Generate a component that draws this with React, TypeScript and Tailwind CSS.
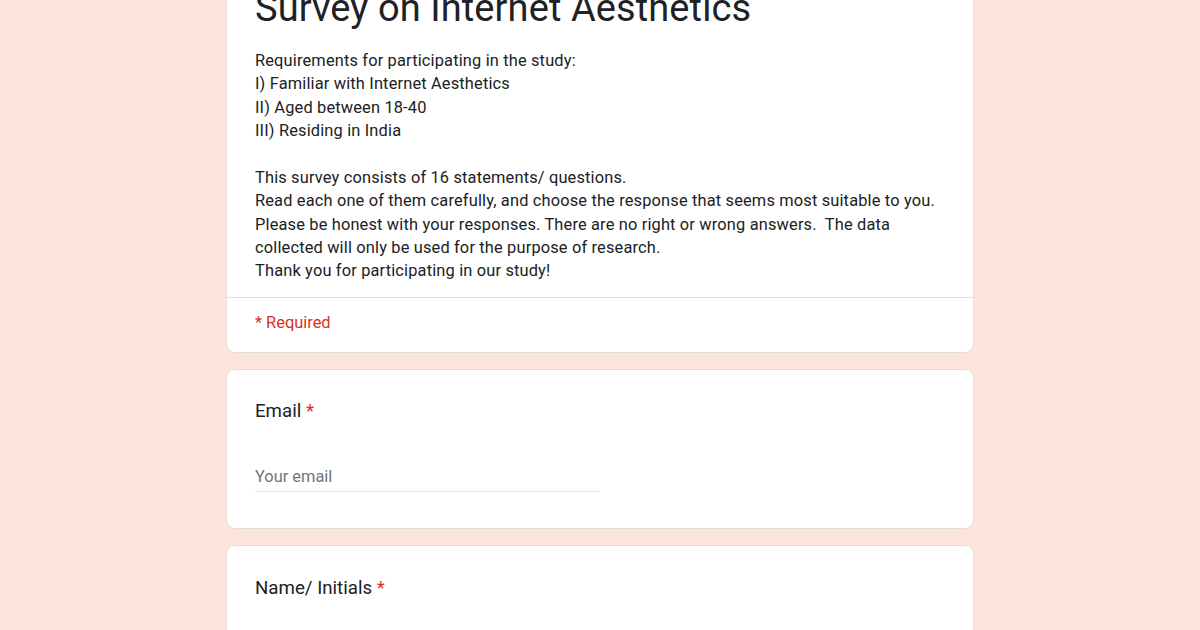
import React from "react";

export default function App() {
  return (
    <div className="min-h-screen w-full overflow-hidden bg-[#fce3dc] font-['Roboto',sans-serif] text-[#202124]">
      <div className="mx-auto -mt-[44px] flex w-[748px] flex-col gap-[16px]">
        <div className="rounded-[9px] border border-[#e3dedc] bg-white">
          <div className="px-[28px] pt-[28px] pb-[14px]">
            <h1 className="text-[38px] leading-[46.8px] font-normal tracking-[0.1px]">Survey on Internet Aesthetics</h1>
            <div className="mt-[17px] text-[16.4px] leading-[23.4px] tracking-[0.16px]">
              <div>Requirements for participating in the study:</div>
              <div>I) Familiar with Internet Aesthetics</div>
              <div>II) Aged between 18-40</div>
              <div>III) Residing in India</div>
              <div>&nbsp;</div>
              <div>This survey consists of 16 statements/ questions.</div>
              <div>Read each one of them carefully, and choose the response that seems most suitable to you.</div>
              <div>Please be honest with your responses. There are no right or wrong answers.&nbsp; The data</div>
              <div>collected will only be used for the purpose of research.</div>
              <div>Thank you for participating in our study!</div>
            </div>
          </div>
          <div className="border-t border-[#e3dedc] px-[28px] pt-[15px] pb-[19px] text-[16.4px] leading-[20px] text-[#d93025]">
            * Required
          </div>
        </div>

        <div className="rounded-[9px] border border-[#e3dedc] bg-white px-[28px] pt-[27px] pb-[36px]">
          <div className="text-[18.7px] leading-[28px]">
            Email <span className="text-[#d93025]">*</span>
          </div>
          <div className="mt-[40px] w-[345px] border-b border-[#e0e0e0] pb-[2px] text-[16.4px] leading-[24px] text-[#70757a]">
            Your email
          </div>
        </div>

        <div className="rounded-[9px] border border-[#e3dedc] bg-white px-[28px] pt-[28px] pb-[37px]">
          <div className="text-[18.7px] leading-[28px]">
            Name/ Initials <span className="text-[#d93025]">*</span>
          </div>
          <div className="mt-[39px] w-[345px] border-b border-[#e0e0e0] pb-[3px] text-[16.4px] leading-[24px] text-[#70757a]">
            Your answer
          </div>
        </div>
      </div>
    </div>
  );
}
